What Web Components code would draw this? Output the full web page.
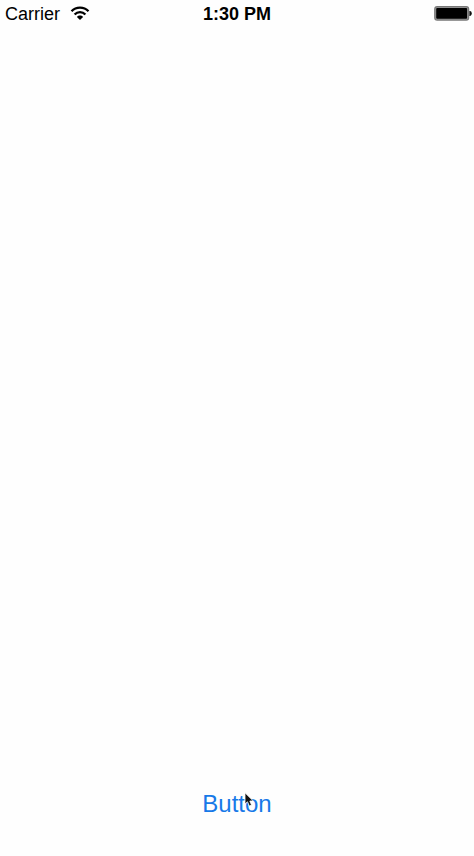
<!DOCTYPE html>
<html lang="en">
<head>
<meta charset="utf-8">
<meta name="viewport" content="width=device-width, initial-scale=1">
<title>Button</title>
<style>
    body {
        margin: 0;
        background: #fefefe;
        font-family: "Liberation Sans", Arial, sans-serif;
    }
</style>
</head>
<body>
<phone-screen>
    <status-bar slot="status" carrier="Carrier" time="1:30 PM"></status-bar>
    <text-button slot="action">Button</text-button>
</phone-screen>
<script>
class PhoneScreen extends HTMLElement {
    constructor() {
        super();
        this.attachShadow({mode: "open"});
        this.shadowRoot.innerHTML = /*html*/`
            <style>
                :host {
                    display: flex;
                    flex-direction: column;
                    min-height: 100vh;
                }
                main {
                    flex: 1;
                    display: flex;
                    align-items: flex-end;
                    justify-content: center;
                    padding-bottom: 36px;
                }
            </style>
            <slot name="status"></slot>
            <main><slot name="action"></slot></main>
        `;
    }
}

class StatusBar extends HTMLElement {
    constructor() {
        super();
        this.attachShadow({mode: "open"});
    }

    connectedCallback() {
        this.renderDom();
    }

    renderDom() {
        this.shadowRoot.innerHTML = /*html*/`
            <style>
                :host {
                    display: grid;
                    grid-template-columns: 1fr auto 1fr;
                    align-items: center;
                    height: 28px;
                    padding: 0 2px;
                    color: #000;
                    font-size: 18px;
                    line-height: 28px;
                }
                .signal {
                    display: flex;
                    align-items: center;
                    gap: 10px;
                    padding-left: 3px;
                }
                .time {
                    font-weight: bold;
                }
                battery-icon {
                    justify-self: end;
                }
            </style>
            <div class="signal"><span>${this.getAttribute('carrier')}</span><wifi-icon></wifi-icon></div>
            <span class="time">${this.getAttribute('time')}</span>
            <battery-icon></battery-icon>
        `;
    }
}

class WifiIcon extends HTMLElement {
    constructor() {
        super();
        this.attachShadow({mode: "open"});
        this.shadowRoot.innerHTML = /*html*/`
            <style>
                :host, svg {
                    display: block;
                }
            </style>
            <svg width="20" height="16" viewBox="0 0 20 16" aria-hidden="true">
                <g fill="none" stroke="#000" stroke-width="2.3">
                    <path d="M1.5 5.3C6.2 .4 13.8 .4 18.5 5.3"/>
                    <path d="M4.6 8.5C7.6 5.3 12.4 5.3 15.4 8.5"/>
                </g>
                <path d="M6.9 10.9C8.6 9.1 11.4 9.1 13.1 10.9L10 14.1Z" fill="#000"/>
            </svg>
        `;
    }
}

class BatteryIcon extends HTMLElement {
    constructor() {
        super();
        this.attachShadow({mode: "open"});
        this.shadowRoot.innerHTML = /*html*/`
            <style>
                :host, svg {
                    display: block;
                }
            </style>
            <svg width="38" height="16" viewBox="0 0 38 16" aria-hidden="true">
                <rect x=".8" y=".7" width="33.8" height="13.4" rx="2.4" fill="#999" stroke="#777" stroke-width="1.3"/>
                <rect x="2.2" y="2" width="30.9" height="10.8" rx="1" fill="#000"/>
                <path d="M35.4 5.1H36.2Q37.8 5.5 37.8 7.5T36.2 9.9H35.4Z" fill="#111"/>
            </svg>
        `;
    }
}

class TextButton extends HTMLElement {
    constructor() {
        super();
        this.attachShadow({mode: "open"});
        this.shadowRoot.innerHTML = /*html*/`
            <style>
                :host {
                    display: block;
                    position: relative;
                }
                button {
                    display: block;
                    margin: 0;
                    padding: 0;
                    border: 0;
                    background: none;
                    color: #1779e8;
                    font: inherit;
                    font-size: 24px;
                    line-height: 32px;
                    cursor: pointer;
                }
                /* pointer lies over the label */
                .pointer {
                    position: absolute;
                    top: 4px;
                    left: 42px;
                    pointer-events: none;
                }
            </style>
            <button type="button"><slot></slot></button>
            <svg class="pointer" width="11" height="16" viewBox="0 0 11 16" aria-hidden="true">
                <path d="M1 .8V12L3.5 9.8L5.3 14L7.5 13L5.8 9H9.3Z" fill="#111" stroke="#fff" stroke-width=".8"/>
            </svg>
        `;
    }
}

customElements.define('wifi-icon', WifiIcon);
customElements.define('battery-icon', BatteryIcon);
customElements.define('status-bar', StatusBar);
customElements.define('text-button', TextButton);
customElements.define('phone-screen', PhoneScreen);
</script>
</body>
</html>
